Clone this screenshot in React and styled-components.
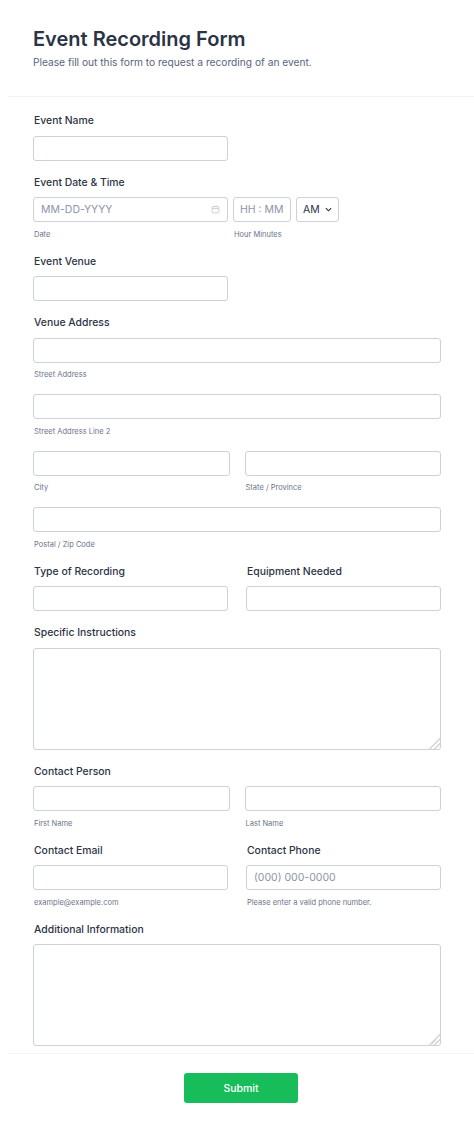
import React from "react";
import styled, { createGlobalStyle } from "styled-components";

const Global = createGlobalStyle`
  html, body { margin: 0; padding: 0; background: #fff; }
  body { font-family: Inter, "Noto Sans", sans-serif; color: #2c3345; }
  * { box-sizing: border-box; }
`;

const Page = styled.div`
  width: 474px;
  min-height: 1128px;
  background: #fff;
`;

const Header = styled.header`
  padding: 27px 33px 0;
  height: 96px;
`;

const Title = styled.h1`
  margin: 0;
  font-size: 20px;
  line-height: 25px;
  font-weight: 600;
  color: #2c3345;
`;

const Subtitle = styled.p`
  margin: 3px 0 0;
  font-size: 10.2px;
  line-height: 14px;
  color: #57647e;
`;

const Divider = styled.hr`
  margin: 0 0 0 8px;
  border: 0;
  border-top: 1px solid #f3f3f8;
`;

const Form = styled.div`
  padding: 16px 33px 7px;
  display: flex;
  flex-direction: column;
  gap: 14px;
`;

const Field = styled.div`
  display: flex;
  flex-direction: column;
  width: ${(p) => (p.$half ? "195px" : "100%")};
`;

const Pair = styled.div`
  display: grid;
  grid-template-columns: 1fr 1fr;
  column-gap: 18px;
`;

const Label = styled.label`
  font-size: 10.4px;
  line-height: 15px;
  font-weight: 500;
  color: #2c3345;
  margin: 0 0 7.5px 1px;
`;

const Split = styled.div`
  display: grid;
  grid-template-columns: 1fr 1fr;
  column-gap: 15px;
`;

const Stack = styled.div`
  display: flex;
  flex-direction: column;
  gap: 14px;
`;

const Cell = styled.div`
  display: flex;
  flex-direction: column;
  width: ${(p) => p.$w || "auto"};
`;

const Input = styled.input`
  height: 25px;
  width: 100%;
  border: 1px solid #cdd1d9;
  border-radius: 3px;
  background: #fff;
  padding: 0 7px;
  font-family: inherit;
  font-size: 10.5px;
  color: #2c3345;
  outline: none;
  &::placeholder { color: #8c95a8; }
`;

const Area = styled.textarea`
  height: 102px;
  width: 100%;
  border: 1px solid #cdd1d9;
  border-radius: 3px;
  background: #fff;
  font-family: inherit;
  outline: none;
  display: block;
  &::-webkit-resizer {
    background:
      linear-gradient(135deg, transparent 0 62%, #d3d6dd 62% 70%, transparent 70% 78%, #d3d6dd 78% 86%, transparent 86%);
  }
`;

const Sub = styled.span`
  margin-top: 7.5px;
  margin-left: 1px;
  font-size: 7.5px;
  line-height: 10px;
  color: #6b7489;
  white-space: nowrap;
`;

const DateRow = styled.div`
  display: flex;
  gap: 5px;
`;

const Box = styled.div`
  height: 25px;
  border: 1px solid #cdd1d9;
  border-radius: 3px;
  display: flex;
  align-items: center;
  justify-content: space-between;
  padding: 0 ${(p) => p.$pad || "7px"};
  font-size: 10.5px;
  white-space: nowrap;
  color: ${(p) => (p.$dark ? "#2c3345" : "#8c95a8")};
  gap: 4px;
`;

const Footer = styled.div`
  border-top: 1px solid #f3f3f8;
  margin-left: 8px;
  display: flex;
  justify-content: center;
  padding: 19px 0 26px;
`;

const Submit = styled.button`
  width: 114px;
  height: 30px;
  border: 0;
  border-radius: 3px;
  background: #18bd5b;
  color: #fff;
  font-family: inherit;
  font-size: 10.5px;
  font-weight: 500;
`;

const CalIcon = () => (
  <svg width="9" height="9" viewBox="0 0 12 12" fill="none" stroke="#c3cad8" strokeWidth="1.2">
    <rect x="1.5" y="2" width="9" height="8.5" rx="1.5" />
    <path d="M1.5 4.5h9M4 1v2M8 1v2" />
  </svg>
);

const Chevron = () => (
  <svg width="7" height="5" viewBox="0 0 8 5" fill="none" stroke="#2c3345" strokeWidth="1.3">
    <path d="M1 1l3 3 3-3" />
  </svg>
);

export default function App() {
  return (
    <Page>
      <Global />
      <Header>
        <Title>Event Recording Form</Title>
        <Subtitle>Please fill out this form to request a recording of an event.</Subtitle>
      </Header>
      <Divider />
      <Form>
        <Field $half>
          <Label>Event Name</Label>
          <Input />
        </Field>

        <Field>
          <Label>Event Date &amp; Time</Label>
          <DateRow>
            <Cell $w="195px">
              <Box>
                <span>MM-DD-YYYY</span>
                <CalIcon />
              </Box>
              <Sub>Date</Sub>
            </Cell>
            <Cell $w="58px">
              <Box $pad="6px">HH : MM</Box>
              <Sub>Hour Minutes</Sub>
            </Cell>
            <Cell $w="43px">
              <Box $dark $pad="6px">
                <span>AM</span>
                <Chevron />
              </Box>
            </Cell>
          </DateRow>
        </Field>

        <Field $half>
          <Label>Event Venue</Label>
          <Input />
        </Field>

        <Field>
          <Label>Venue Address</Label>
          <Stack>
            <Cell>
              <Input />
              <Sub>Street Address</Sub>
            </Cell>
            <Cell>
              <Input />
              <Sub>Street Address Line 2</Sub>
            </Cell>
            <Split>
              <Cell>
                <Input />
                <Sub>City</Sub>
              </Cell>
              <Cell>
                <Input />
                <Sub>State / Province</Sub>
              </Cell>
            </Split>
            <Cell>
              <Input />
              <Sub>Postal / Zip Code</Sub>
            </Cell>
          </Stack>
        </Field>

        <Pair>
          <Field>
            <Label>Type of Recording</Label>
            <Input />
          </Field>
          <Field>
            <Label>Equipment Needed</Label>
            <Input />
          </Field>
        </Pair>

        <Field>
          <Label>Specific Instructions</Label>
          <Area />
        </Field>

        <Field>
          <Label>Contact Person</Label>
          <Split>
            <Cell>
              <Input />
              <Sub>First Name</Sub>
            </Cell>
            <Cell>
              <Input />
              <Sub>Last Name</Sub>
            </Cell>
          </Split>
        </Field>

        <Pair>
          <Field>
            <Label>Contact Email</Label>
            <Input />
            <Sub>example@example.com</Sub>
          </Field>
          <Field>
            <Label>Contact Phone</Label>
            <Input placeholder="(000) 000-0000" />
            <Sub>Please enter a valid phone number.</Sub>
          </Field>
        </Pair>

        <Field>
          <Label>Additional Information</Label>
          <Area />
        </Field>
      </Form>
      <Footer>
        <Submit>Submit</Submit>
      </Footer>
    </Page>
  );
}
